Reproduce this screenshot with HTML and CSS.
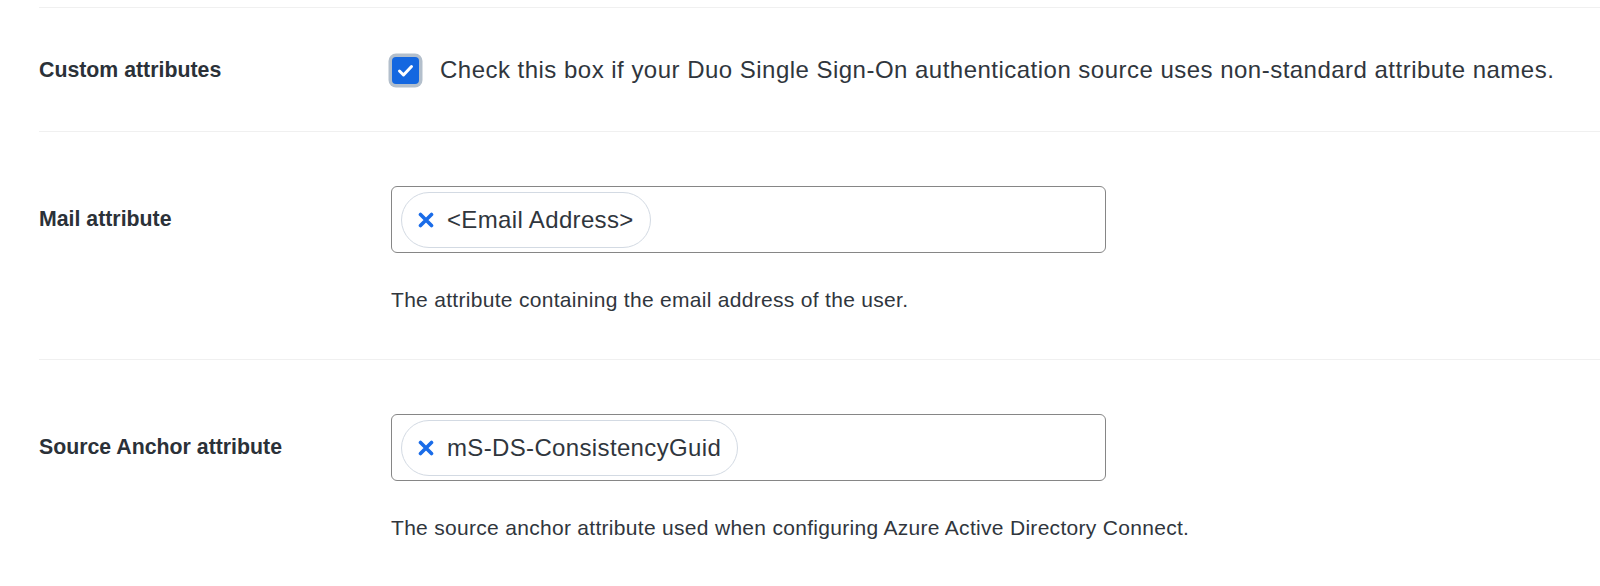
FILE: index.html
```html
<!DOCTYPE html>
<html lang="en">
<head>
  <meta charset="UTF-8">
  <meta name="viewport" content="width=device-width, initial-scale=1.0">
  <title>Attribute Settings</title>
  <link rel="stylesheet" href="styles.css">
</head>
<body>
  <div class="settings">
    <div class="field-row check-row">
      <div class="field-label">Custom attributes</div>
      <div class="field-control">
        <label class="check">
          <span class="check-box">
            <svg width="27" height="27" viewBox="0 0 27 27">
              <polyline points="7.5,14 11.5,18 19.5,9.5" fill="none" stroke="#fff" stroke-width="3" stroke-linecap="round" stroke-linejoin="round"/>
            </svg>
          </span>
          Check this box if your Duo Single Sign-On authentication source uses non-standard attribute names.
        </label>
      </div>
    </div>

    <div class="field-row">
      <div class="field-label">Mail attribute</div>
      <div class="field-control">
        <div class="tag-input">
          <span class="tag">
            <svg class="tag-remove" width="16" height="16" viewBox="0 0 16 16">
              <path d="M2.5 2.5 L13.5 13.5 M13.5 2.5 L2.5 13.5" stroke="#1a6ce8" stroke-width="3.6" stroke-linecap="round"/>
            </svg>
            &lt;Email Address&gt;
          </span>
        </div>
        <p class="help">The attribute containing the email address of the user.</p>
      </div>
    </div>

    <div class="field-row">
      <div class="field-label">Source Anchor attribute</div>
      <div class="field-control">
        <div class="tag-input">
          <span class="tag">
            <svg class="tag-remove" width="16" height="16" viewBox="0 0 16 16">
              <path d="M2.5 2.5 L13.5 13.5 M13.5 2.5 L2.5 13.5" stroke="#1a6ce8" stroke-width="3.6" stroke-linecap="round"/>
            </svg>
            mS-DS-ConsistencyGuid
          </span>
        </div>
        <p class="help">The source anchor attribute used when configuring Azure Active Directory Connect.</p>
      </div>
    </div>
  </div>
</body>
</html>
```

FILE: styles.css
```css
body {
  margin: 0;
  background-color: #fff;
  font-family: "Liberation Sans", Arial, sans-serif;
  color: #30363d;
}

.settings {
  margin-left: 39px;
  padding-top: 7px;
}

.field-row {
  display: grid;
  grid-template-columns: 352px 1fr;
  align-items: start;
  border-top: 1px solid #f0f0f0;
  padding: 54px 0 44px;
}

.check-row {
  padding: 45px 0 44px;
}

.field-label {
  font-size: 21.3px;
  font-weight: bold;
  color: #2b3138;
  line-height: 67px;
}

.check-row .field-label {
  line-height: 34px;
}

.check {
  display: flex;
  align-items: center;
  height: 34px;
  font-size: 24px;
  letter-spacing: 0.48px;
}

.check-box {
  display: inline-flex;
  width: 27px;
  height: 27px;
  margin: 0 21px 0 1px;
  border-radius: 4px;
  background-color: #1467e0;
  box-shadow: 0 0 0 3.5px #b3bfcc;
}

.tag-input {
  display: flex;
  align-items: center;
  box-sizing: border-box;
  width: 715px;
  height: 67px;
  padding: 0 9px;
  border: 1px solid #868686;
  border-radius: 6px;
}

.tag {
  display: inline-flex;
  align-items: center;
  box-sizing: border-box;
  height: 56px;
  padding: 0 16px;
  border: 1px solid #d3dae3;
  border-radius: 28px;
  font-size: 24px;
  letter-spacing: 0.35px;
  color: #30363d;
}

.tag-remove {
  margin-right: 13px;
}

.help {
  margin: 32px 0 0;
  font-size: 21px;
  line-height: 30px;
  letter-spacing: 0.3px;
}
```
